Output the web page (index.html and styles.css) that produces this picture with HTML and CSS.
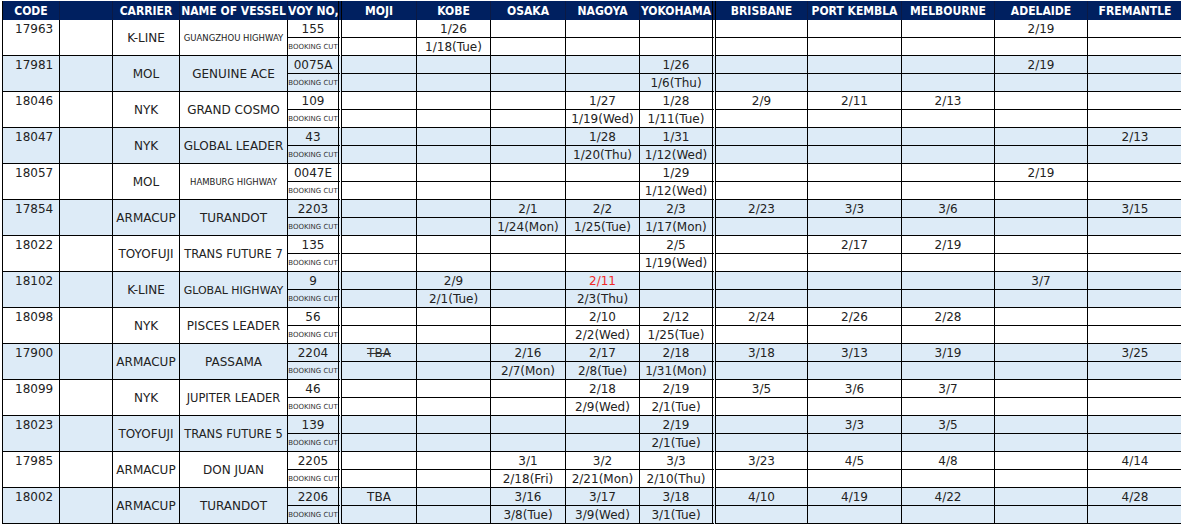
FILE: index.html
```html
<!DOCTYPE html>
<html>
<head>
<meta charset="utf-8">
<title>Schedule</title>
<link rel="stylesheet" href="styles.css">
</head>
<body>
<div class="sheet">
  <div class="hd">
    <div>CODE</div><div></div><div>CARRIER</div><div>NAME OF VESSEL</div><div>VOY NO,</div>
    <div>MOJI</div><div>KOBE</div><div>OSAKA</div><div>NAGOYA</div><div>YOKOHAMA</div>
    <div>BRISBANE</div><div>PORT KEMBLA</div><div>MELBOURNE</div><div>ADELAIDE</div><div>FREMANTLE</div>
  </div>

  <div class="g">
    <div class="code">17963</div><div></div><div class="mc">K-LINE</div><div class="mc small">GUANGZHOU HIGHWAY</div><div>155</div>
    <div></div><div>1/26</div><div></div><div></div><div></div><div></div><div></div><div></div><div>2/19</div><div></div>
    <div class="bc">BOOKING CUT</div>
    <div></div><div>1/18(Tue)</div><div></div><div></div><div></div><div></div><div></div><div></div><div></div><div></div>
  </div>

  <div class="g alt">
    <div class="code">17981</div><div></div><div class="mc">MOL</div><div class="mc">GENUINE ACE</div><div>0075A</div>
    <div></div><div></div><div></div><div></div><div>1/26</div><div></div><div></div><div></div><div>2/19</div><div></div>
    <div class="bc">BOOKING CUT</div>
    <div></div><div></div><div></div><div></div><div>1/6(Thu)</div><div></div><div></div><div></div><div></div><div></div>
  </div>

  <div class="g">
    <div class="code">18046</div><div></div><div class="mc">NYK</div><div class="mc">GRAND COSMO</div><div>109</div>
    <div></div><div></div><div></div><div>1/27</div><div>1/28</div><div>2/9</div><div>2/11</div><div>2/13</div><div></div><div></div>
    <div class="bc">BOOKING CUT</div>
    <div></div><div></div><div></div><div>1/19(Wed)</div><div>1/11(Tue)</div><div></div><div></div><div></div><div></div><div></div>
  </div>

  <div class="g alt">
    <div class="code">18047</div><div></div><div class="mc">NYK</div><div class="mc">GLOBAL LEADER</div><div>43</div>
    <div></div><div></div><div></div><div>1/28</div><div>1/31</div><div></div><div></div><div></div><div></div><div>2/13</div>
    <div class="bc">BOOKING CUT</div>
    <div></div><div></div><div></div><div>1/20(Thu)</div><div>1/12(Wed)</div><div></div><div></div><div></div><div></div><div></div>
  </div>

  <div class="g">
    <div class="code">18057</div><div></div><div class="mc">MOL</div><div class="mc small">HAMBURG HIGHWAY</div><div>0047E</div>
    <div></div><div></div><div></div><div></div><div>1/29</div><div></div><div></div><div></div><div>2/19</div><div></div>
    <div class="bc">BOOKING CUT</div>
    <div></div><div></div><div></div><div></div><div>1/12(Wed)</div><div></div><div></div><div></div><div></div><div></div>
  </div>

  <div class="g alt">
    <div class="code">17854</div><div></div><div class="mc">ARMACUP</div><div class="mc">TURANDOT</div><div>2203</div>
    <div></div><div></div><div>2/1</div><div>2/2</div><div>2/3</div><div>2/23</div><div>3/3</div><div>3/6</div><div></div><div>3/15</div>
    <div class="bc">BOOKING CUT</div>
    <div></div><div></div><div>1/24(Mon)</div><div>1/25(Tue)</div><div>1/17(Mon)</div><div></div><div></div><div></div><div></div><div></div>
  </div>

  <div class="g">
    <div class="code">18022</div><div></div><div class="mc">TOYOFUJI</div><div class="mc fit">TRANS FUTURE 7</div><div>135</div>
    <div></div><div></div><div></div><div></div><div>2/5</div><div></div><div>2/17</div><div>2/19</div><div></div><div></div>
    <div class="bc">BOOKING CUT</div>
    <div></div><div></div><div></div><div></div><div>1/19(Wed)</div><div></div><div></div><div></div><div></div><div></div>
  </div>

  <div class="g alt">
    <div class="code">18102</div><div></div><div class="mc">K-LINE</div><div class="mc tight">GLOBAL HIGHWAY</div><div>9</div>
    <div></div><div>2/9</div><div></div><div class="red">2/11</div><div></div><div></div><div></div><div></div><div>3/7</div><div></div>
    <div class="bc">BOOKING CUT</div>
    <div></div><div>2/1(Tue)</div><div></div><div>2/3(Thu)</div><div></div><div></div><div></div><div></div><div></div><div></div>
  </div>

  <div class="g">
    <div class="code">18098</div><div></div><div class="mc">NYK</div><div class="mc">PISCES LEADER</div><div>56</div>
    <div></div><div></div><div></div><div>2/10</div><div>2/12</div><div>2/24</div><div>2/26</div><div>2/28</div><div></div><div></div>
    <div class="bc">BOOKING CUT</div>
    <div></div><div></div><div></div><div>2/2(Wed)</div><div>1/25(Tue)</div><div></div><div></div><div></div><div></div><div></div>
  </div>

  <div class="g alt">
    <div class="code">17900</div><div></div><div class="mc">ARMACUP</div><div class="mc">PASSAMA</div><div>2204</div>
    <div class="strike">TBA</div><div></div><div>2/16</div><div>2/17</div><div>2/18</div><div>3/18</div><div>3/13</div><div>3/19</div><div></div><div>3/25</div>
    <div class="bc">BOOKING CUT</div>
    <div></div><div></div><div>2/7(Mon)</div><div>2/8(Tue)</div><div>1/31(Mon)</div><div></div><div></div><div></div><div></div><div></div>
  </div>

  <div class="g">
    <div class="code">18099</div><div></div><div class="mc">NYK</div><div class="mc fit">JUPITER LEADER</div><div>46</div>
    <div></div><div></div><div></div><div>2/18</div><div>2/19</div><div>3/5</div><div>3/6</div><div>3/7</div><div></div><div></div>
    <div class="bc">BOOKING CUT</div>
    <div></div><div></div><div></div><div>2/9(Wed)</div><div>2/1(Tue)</div><div></div><div></div><div></div><div></div><div></div>
  </div>

  <div class="g alt">
    <div class="code">18023</div><div></div><div class="mc">TOYOFUJI</div><div class="mc fit">TRANS FUTURE 5</div><div>139</div>
    <div></div><div></div><div></div><div></div><div>2/19</div><div></div><div>3/3</div><div>3/5</div><div></div><div></div>
    <div class="bc">BOOKING CUT</div>
    <div></div><div></div><div></div><div></div><div>2/1(Tue)</div><div></div><div></div><div></div><div></div><div></div>
  </div>

  <div class="g">
    <div class="code">17985</div><div></div><div class="mc">ARMACUP</div><div class="mc">DON JUAN</div><div>2205</div>
    <div></div><div></div><div>3/1</div><div>3/2</div><div>3/3</div><div>3/23</div><div>4/5</div><div>4/8</div><div></div><div>4/14</div>
    <div class="bc">BOOKING CUT</div>
    <div></div><div></div><div>2/18(Fri)</div><div>2/21(Mon)</div><div>2/10(Thu)</div><div></div><div></div><div></div><div></div><div></div>
  </div>

  <div class="g alt">
    <div class="code">18002</div><div></div><div class="mc">ARMACUP</div><div class="mc">TURANDOT</div><div>2206</div>
    <div>TBA</div><div></div><div>3/16</div><div>3/17</div><div>3/18</div><div>4/10</div><div>4/19</div><div>4/22</div><div></div><div>4/28</div>
    <div class="bc">BOOKING CUT</div>
    <div></div><div></div><div>3/8(Tue)</div><div>3/9(Wed)</div><div>3/1(Tue)</div><div></div><div></div><div></div><div></div><div></div>
  </div>
</div>
</body>
</html>
```

FILE: styles.css
```css
html, body {
  margin: 0;
  padding: 0;
  background: #ffffff;
  overflow: hidden;
}

body {
  font-family: "DejaVu Sans", "Liberation Sans", sans-serif;
  font-size: 12px;
  color: #222222;
}

.sheet {
  display: grid;
  grid-template-columns: 57px 53px 67px 108px 54px 75px 74px 75px 74px 76px 92px 94px 93px 93px 95px;
  grid-template-rows: 19px;
  grid-auto-rows: 18px;
  width: max-content;
  margin-top: 1px;
  margin-left: 2px;
  border-left: 1px solid #000000;
}

.hd, .g {
  display: contents;
}

.hd > div {
  background: #002060;
  color: #ffffff;
  font-weight: bold;
  font-stretch: condensed;
  text-align: center;
  padding-top: 2px;
  line-height: 17px;
  white-space: nowrap;
  overflow: hidden;
  border-right: 1px solid #0b1a45;
}

.g > div {
  border-right: 1px solid #000000;
  border-bottom: 1px solid #000000;
  text-align: center;
  padding-top: 2px;
  line-height: 15px;
  white-space: nowrap;
  overflow: hidden;
}

.g.alt > div {
  background: #ddebf7;
}

.g > div:nth-child(-n+4) {
  grid-row: span 2;
}

.hd > div:nth-child(5),
.hd > div:nth-child(10),
.g > div:nth-child(5),
.g > div:nth-child(10),
.g > div:nth-child(16),
.g > div:nth-child(21) {
  border-right: 4px double #000000;
}

.g > .code {
  text-align: left;
  padding-left: 12px;
}

.g > .mc {
  display: flex;
  align-items: center;
  justify-content: center;
  padding-top: 1px;
}

.g > .small {
  font-size: 8.5px;
}

.g > .fit {
  font-size: 11.5px;
}

.g > .tight {
  font-size: 11px;
}

.g > .bc {
  font-size: 7px;
  color: #333333;
  padding-top: 3px;
  line-height: 12px;
}

.red {
  color: #f02828;
}

.strike {
  text-decoration: line-through;
  color: #333333;
}
```
